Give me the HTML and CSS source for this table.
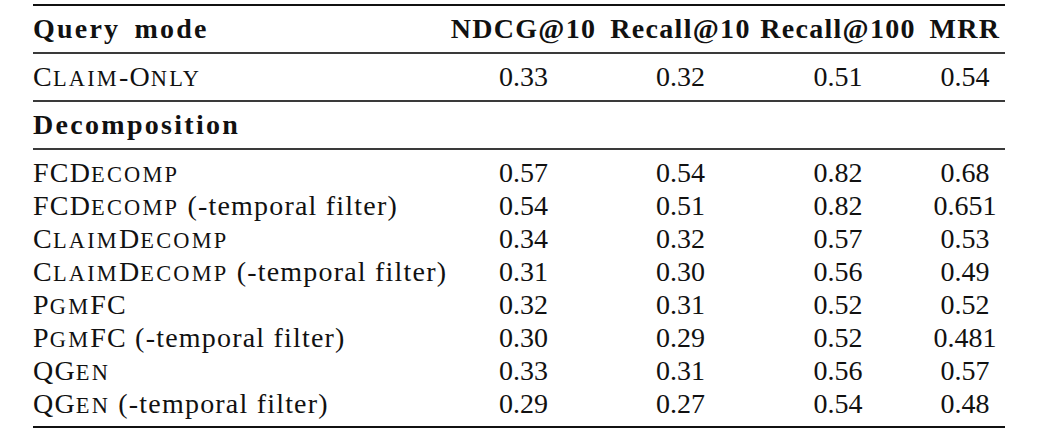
FILE: index.html
```html
<!DOCTYPE html>
<html lang="en">
<head>
<meta charset="utf-8">
<title>Query mode results</title>
<link rel="stylesheet" href="styles.css">
</head>
<body>
<table class="results">
  <colgroup>
    <col class="c-label">
    <col class="c-ndcg">
    <col class="c-r10">
    <col class="c-r100">
    <col class="c-mrr">
  </colgroup>
  <thead>
    <tr>
      <th class="label">Query mode</th>
      <th class="num">NDCG@10</th>
      <th class="num">Recall@10</th>
      <th class="num">Recall@100</th>
      <th class="num mrr">MRR</th>
    </tr>
  </thead>
  <tbody>
    <tr class="group-row">
      <td class="label">C<span class="sc">laim</span>-O<span class="sc">nly</span></td>
      <td class="num">0.33</td>
      <td class="num">0.32</td>
      <td class="num">0.51</td>
      <td class="num mrr">0.54</td>
    </tr>
    <tr class="group-row section">
      <td class="label">Decomposition</td>
      <td></td>
      <td></td>
      <td></td>
      <td></td>
    </tr>
    <tr class="data-row first">
      <td class="label">FCD<span class="sc">ecomp</span></td>
      <td class="num">0.57</td>
      <td class="num">0.54</td>
      <td class="num">0.82</td>
      <td class="num mrr">0.68</td>
    </tr>
    <tr class="data-row">
      <td class="label">FCD<span class="sc">ecomp</span> (-temporal filter)</td>
      <td class="num">0.54</td>
      <td class="num">0.51</td>
      <td class="num">0.82</td>
      <td class="num mrr">0.651</td>
    </tr>
    <tr class="data-row">
      <td class="label">C<span class="sc">laim</span>D<span class="sc">ecomp</span></td>
      <td class="num">0.34</td>
      <td class="num">0.32</td>
      <td class="num">0.57</td>
      <td class="num mrr">0.53</td>
    </tr>
    <tr class="data-row">
      <td class="label">C<span class="sc">laim</span>D<span class="sc">ecomp</span> (-temporal filter)</td>
      <td class="num">0.31</td>
      <td class="num">0.30</td>
      <td class="num">0.56</td>
      <td class="num mrr">0.49</td>
    </tr>
    <tr class="data-row">
      <td class="label">P<span class="sc">gm</span>FC</td>
      <td class="num">0.32</td>
      <td class="num">0.31</td>
      <td class="num">0.52</td>
      <td class="num mrr">0.52</td>
    </tr>
    <tr class="data-row">
      <td class="label">P<span class="sc">gm</span>FC (-temporal filter)</td>
      <td class="num">0.30</td>
      <td class="num">0.29</td>
      <td class="num">0.52</td>
      <td class="num mrr">0.481</td>
    </tr>
    <tr class="data-row">
      <td class="label">QG<span class="sc">en</span></td>
      <td class="num">0.33</td>
      <td class="num">0.31</td>
      <td class="num">0.56</td>
      <td class="num mrr">0.57</td>
    </tr>
    <tr class="data-row last">
      <td class="label">QG<span class="sc">en</span> (-temporal filter)</td>
      <td class="num">0.29</td>
      <td class="num">0.27</td>
      <td class="num">0.54</td>
      <td class="num mrr">0.48</td>
    </tr>
  </tbody>
</table>
</body>
</html>
```
FILE: styles.css
```css
html, body {
  margin: 0;
  padding: 0;
  background: #ffffff;
}

.results {
  margin: 4px 0 0 33px;
  width: 972px;
  table-layout: fixed;
  border-collapse: separate;
  border-spacing: 0;
  font-family: "Liberation Serif", "Times New Roman", serif;
  font-size: 28px;
  color: #111111;
}

.c-label { width: 412px; }
.c-ndcg { width: 157px; }
.c-r10 { width: 157px; }
.c-r100 { width: 158px; }
.c-mrr { width: 88px; }

.results th,
.results td {
  padding: 0;
  height: 33px;
  line-height: 33px;
  white-space: nowrap;
  vertical-align: baseline;
}

.label {
  text-align: left;
  padding-left: 2px;
}

.results td.label {
  letter-spacing: 1.2px;
}

.num {
  text-align: center;
}

.results .mrr {
  padding-left: 8px;
}

.results thead th {
  font-weight: bold;
  letter-spacing: 1.3px;
  padding-top: 6px;
  padding-bottom: 7px;
  border-top: 2px solid #111111;
  border-bottom: 2px solid #3a3a3a;
}

.results thead th.label {
  letter-spacing: 2.2px;
  word-spacing: 5px;
}

.group-row td {
  padding-top: 6px;
  padding-bottom: 7px;
  border-bottom: 2px solid #3a3a3a;
}

.results .section td.label {
  font-weight: bold;
  letter-spacing: 2.3px;
}

.sc {
  text-transform: uppercase;
  font-size: 0.8em;
  line-height: 1;
  letter-spacing: 2.2px;
}

.data-row.first td {
  padding-top: 6px;
}

.data-row.last td {
  padding-bottom: 6px;
  border-bottom: 2px solid #111111;
}
```
